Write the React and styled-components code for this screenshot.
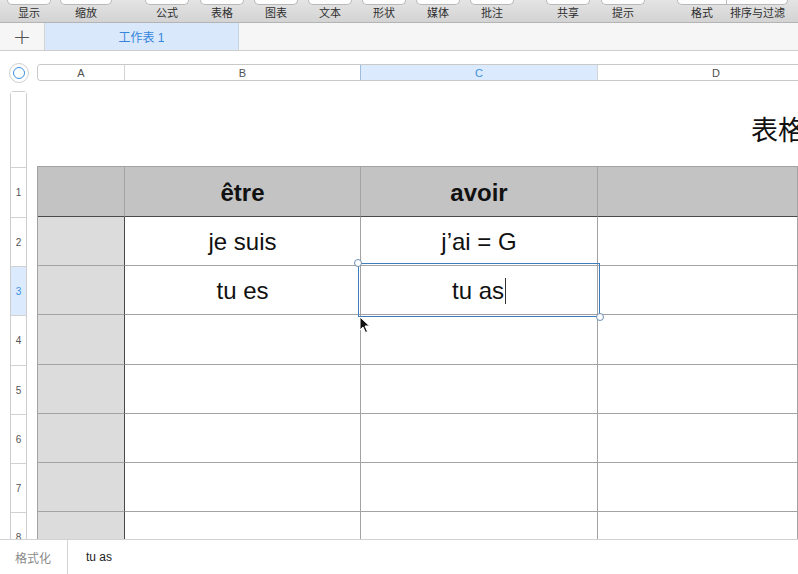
import styled, { createGlobalStyle } from 'styled-components';

const GlobalStyle = createGlobalStyle`
  html, body {
    margin: 0;
    padding: 0;
    background: #ffffff;
  }
  body {
    font-family: "Liberation Sans", "Noto Sans CJK SC", Arial, sans-serif;
  }
  * { box-sizing: border-box; }
`;

const CJK = `"Liberation Sans", "Noto Sans CJK SC", sans-serif`;

const Page = styled.div`
  width: 798px;
  height: 574px;
  display: flex;
  flex-direction: column;
  overflow: hidden;
  background: #fff;
`;

/* ---------- toolbar ---------- */
const Toolbar = styled.div`
  height: 23px;
  flex: none;
  display: flex;
  align-items: flex-start;
  padding-left: 7px;
  background: linear-gradient(#e4e4e4, #d3d3d3);
  border-bottom: 1px solid #b4b4b4;
`;

const Tool = styled.div`
  width: ${(p) => p.$w || 44}px;
  margin-left: ${(p) => (p.$gap === undefined ? 10 : p.$gap)}px;
  display: flex;
  flex-direction: column;
  align-items: center;
`;

const ToolButton = styled.div`
  width: 100%;
  height: 5px;
  background: #fdfdfd;
  border: 1px solid #b9b9b9;
  border-top: none;
  border-radius: 0 0 5px 5px;
`;

const ToolLabel = styled.span`
  margin-top: 2px;
  font-family: ${CJK};
  font-size: 11px;
  line-height: 13px;
  color: #2e2e2e;
  white-space: nowrap;
`;

const Segmented = styled.div`
  margin-left: 32px;
  display: flex;
`;

const SegPart = styled.div`
  width: ${(p) => p.$w}px;
  display: flex;
  flex-direction: column;
  align-items: center;
`;

const SegButton = styled.div`
  width: 100%;
  height: 5px;
  background: #fdfdfd;
  border: 1px solid #b9b9b9;
  border-top: none;
  border-left: ${(p) => (p.$first ? '1px solid #b9b9b9' : 'none')};
  border-radius: ${(p) => (p.$first ? '0 0 0 5px' : '0 0 5px 0')};
`;

/* ---------- tab bar ---------- */
const TabBar = styled.div`
  height: 28px;
  flex: none;
  display: flex;
  background: #f6f6f6;
  border-bottom: 1px solid #cdcdcd;
`;

const AddSheet = styled.div`
  width: 45px;
  display: flex;
  align-items: center;
  justify-content: center;
  border-right: 1px solid #d4d4d4;
  color: #555;
  font-family: "DejaVu Sans", sans-serif;
  font-size: 22px;
  font-weight: 300;
`;

const SheetTab = styled.div`
  width: 194px;
  display: flex;
  align-items: center;
  justify-content: center;
  background: #d9e8fb;
  border-right: 1px solid #c4d3e4;
  color: #3485db;
  font-family: ${CJK};
  font-size: 12px;
`;

/* ---------- sheet ---------- */
const Sheet = styled.div`
  flex: 1;
  overflow: hidden;
  padding-top: 13px;
`;

const HeaderLine = styled.div`
  display: flex;
  height: 17px;
`;

const Corner = styled.div`
  width: 37px;
  display: flex;
  align-items: center;
  justify-content: center;
`;

const CornerRing = styled.div`
  width: 20px;
  height: 20px;
  border-radius: 50%;
  border: 1px solid #cfcfcf;
  background: #fff;
  display: flex;
  align-items: center;
  justify-content: center;
`;

const CornerDot = styled.div`
  width: 12px;
  height: 12px;
  border-radius: 50%;
  border: 1.5px solid #3c90e2;
`;

const ColHeaders = styled.div`
  flex: 1;
  display: grid;
  grid-template-columns: 86px 236px 237px 1fr;
  border: 1px solid #c9c9c9;
  border-right: none;
  border-radius: 4px 0 0 4px;
  overflow: hidden;
`;

const ColHead = styled.div`
  display: flex;
  align-items: center;
  justify-content: center;
  padding-left: ${(p) => p.$shift || 0}px;
  font-size: 11px;
  color: ${(p) => (p.$active ? '#3d8fe0' : '#505050')};
  background: ${(p) => (p.$active ? '#dbeafc' : '#fff')};
  border-left: ${(p) =>
    p.$first ? 'none' : p.$active ? '1px solid #9fbcdc' : '1px solid #d4d4d4'};
  ${(p) => p.$active && 'border-right: 1px solid #9fbcdc; margin-right: -1px;'}
`;

const Body = styled.div`
  display: flex;
  margin-top: 10px;
`;

const RowHeaders = styled.div`
  width: 17px;
  margin-left: 10px;
  margin-right: 10px;
  border: 1px solid #cdcdcd;
  border-bottom: none;
  border-radius: 4px 4px 0 0;
  display: flex;
  flex-direction: column;
  flex: none;
`;

const RowHead = styled.div`
  height: ${(p) => p.$h}px;
  flex: none;
  display: flex;
  align-items: center;
  justify-content: center;
  font-size: 10px;
  color: ${(p) => (p.$active ? '#3d8fe0' : '#555')};
  background: ${(p) => (p.$active ? '#dbeafc' : '#fff')};
  border-top: ${(p) => (p.$first ? 'none' : '1px solid #d2d2d2')};
`;

const TableArea = styled.div`
  flex: 1;
  display: flex;
  flex-direction: column;
  min-width: 0;
`;

const TitleRow = styled.div`
  height: 75px;
  display: flex;
  align-items: center;
  padding-left: 714px;
  white-space: nowrap;
  overflow: hidden;
  font-family: ${CJK};
  font-size: 27px;
  color: #111;
`;

const Grid = styled.div`
  display: grid;
  grid-template-columns: 87px 236px 237px 1fr;
  grid-template-rows: 50px 49px 49px 50px 49px 49px 49px 49px;
  border-top: 1px solid #a3a3a3;
  border-left: 1px solid #a3a3a3;
`;

const Cell = styled.div`
  position: relative;
  z-index: ${(p) => (p.$selected ? 2 : 'auto')};
  display: flex;
  align-items: center;
  justify-content: center;
  padding-top: 2px;
  font-size: 24px;
  color: #111;
  font-weight: ${(p) => (p.$head ? 700 : 400)};
  background: ${(p) => (p.$head ? '#c2c3c2' : p.$label ? '#dcdcdc' : '#fff')};
  border-right: 1px solid ${(p) => (p.$label && !p.$head ? '#4a4a4a' : '#a3a3a3')};
  border-bottom: 1px solid ${(p) => (p.$head ? '#4a4a4a' : '#a3a3a3')};
`;

const Selection = styled.div`
  position: absolute;
  inset: -3px -3px -3px -3px;
  border: 1.5px solid #3f7db8;
  pointer-events: none;
`;

const Handle = styled.div`
  position: absolute;
  width: 8px;
  height: 8px;
  border-radius: 50%;
  background: #fff;
  border: 1px solid #6e8fb2;
  ${(p) => (p.$end ? 'right: -5px; bottom: -5px;' : 'left: -5px; top: -5px;')}
`;

const Caret = styled.span`
  display: inline-block;
  width: 1px;
  height: 26px;
  margin-left: 1px;
  background: #333;
  vertical-align: middle;
`;

const Pointer = styled.svg`
  position: absolute;
  left: -2px;
  top: 100%;
  margin-top: 2px;
  z-index: 3;
`;

/* ---------- bottom bar ---------- */
const FormulaBar = styled.div`
  height: 35px;
  flex: none;
  display: flex;
  align-items: center;
  background: #fff;
  border-top: 1px solid #d2d2d2;
  position: relative;
  z-index: 4;
`;

const FormatLabel = styled.div`
  width: 68px;
  height: 100%;
  display: flex;
  align-items: center;
  padding-left: 15px;
  border-right: 1px solid #d4d4d4;
  font-family: ${CJK};
  font-size: 12px;
  color: #8a8a8a;
`;

const FormulaText = styled.div`
  padding-left: 18px;
  font-size: 12px;
  color: #222;
`;

const tools = [
  { label: '显示', gap: 0 },
  { label: '缩放', w: 52, gap: 9 },
  { label: '公式', gap: 33 },
  { label: '表格', gap: 11 },
  { label: '图表' },
  { label: '文本' },
  { label: '形状' },
  { label: '媒体' },
  { label: '批注' },
  { label: '共享', gap: 32 },
  { label: '提示', gap: 11 },
];

const rowHeights = [50, 49, 49, 50, 49, 49, 49, 49];

const rows = [
  ['', 'être', 'avoir', ''],
  ['', 'je suis', 'j’ai = G', ''],
  ['', 'tu es', 'tu as', ''],
  ['', '', '', ''],
  ['', '', '', ''],
  ['', '', '', ''],
  ['', '', '', ''],
  ['', '', '', ''],
];

function App() {
  return (
    <Page>
      <GlobalStyle />
      <Toolbar>
        {tools.map((t) => (
          <Tool key={t.label} $w={t.w} $gap={t.gap}>
            <ToolButton />
            <ToolLabel>{t.label}</ToolLabel>
          </Tool>
        ))}
        <Segmented>
          <SegPart $w={50}>
            <SegButton $first />
            <ToolLabel>格式</ToolLabel>
          </SegPart>
          <SegPart $w={61}>
            <SegButton />
            <ToolLabel>排序与过滤</ToolLabel>
          </SegPart>
        </Segmented>
      </Toolbar>

      <TabBar>
        <AddSheet>+</AddSheet>
        <SheetTab>工作表 1</SheetTab>
      </TabBar>

      <Sheet>
        <HeaderLine>
          <Corner>
            <CornerRing>
              <CornerDot />
            </CornerRing>
          </Corner>
          <ColHeaders>
            <ColHead $first>A</ColHead>
            <ColHead>B</ColHead>
            <ColHead $active>C</ColHead>
            <ColHead $shift={36}>D</ColHead>
          </ColHeaders>
        </HeaderLine>

        <Body>
          <RowHeaders>
            <RowHead $h={75} $first />
            {rowHeights.map((h, i) => (
              <RowHead key={i} $h={h} $active={i === 2}>
                {i + 1}
              </RowHead>
            ))}
          </RowHeaders>

          <TableArea>
            <TitleRow>表格 1</TitleRow>
            <Grid>
              {rows.map((r, ri) =>
                r.map((v, ci) => {
                  const selected = ri === 2 && ci === 2;
                  return (
                    <Cell
                      key={`${ri}-${ci}`}
                      $head={ri === 0}
                      $label={ci === 0}
                      $selected={selected}
                    >
                      {v}
                      {selected && (
                        <>
                          <Caret />
                          <Selection>
                            <Handle />
                            <Handle $end />
                          </Selection>
                          <Pointer width="12" height="18" viewBox="0 0 12 18">
                            <path
                              d="M1 1 L1 14 L4 11 L6.5 16.5 L8.5 15.5 L6 10 L10.5 10 Z"
                              fill="#111"
                              stroke="#fff"
                              strokeWidth="1"
                              strokeLinejoin="round"
                            />
                          </Pointer>
                        </>
                      )}
                    </Cell>
                  );
                })
              )}
            </Grid>
          </TableArea>
        </Body>
      </Sheet>

      <FormulaBar>
        <FormatLabel>格式化</FormatLabel>
        <FormulaText>tu as</FormulaText>
      </FormulaBar>
    </Page>
  );
}

export default App;
